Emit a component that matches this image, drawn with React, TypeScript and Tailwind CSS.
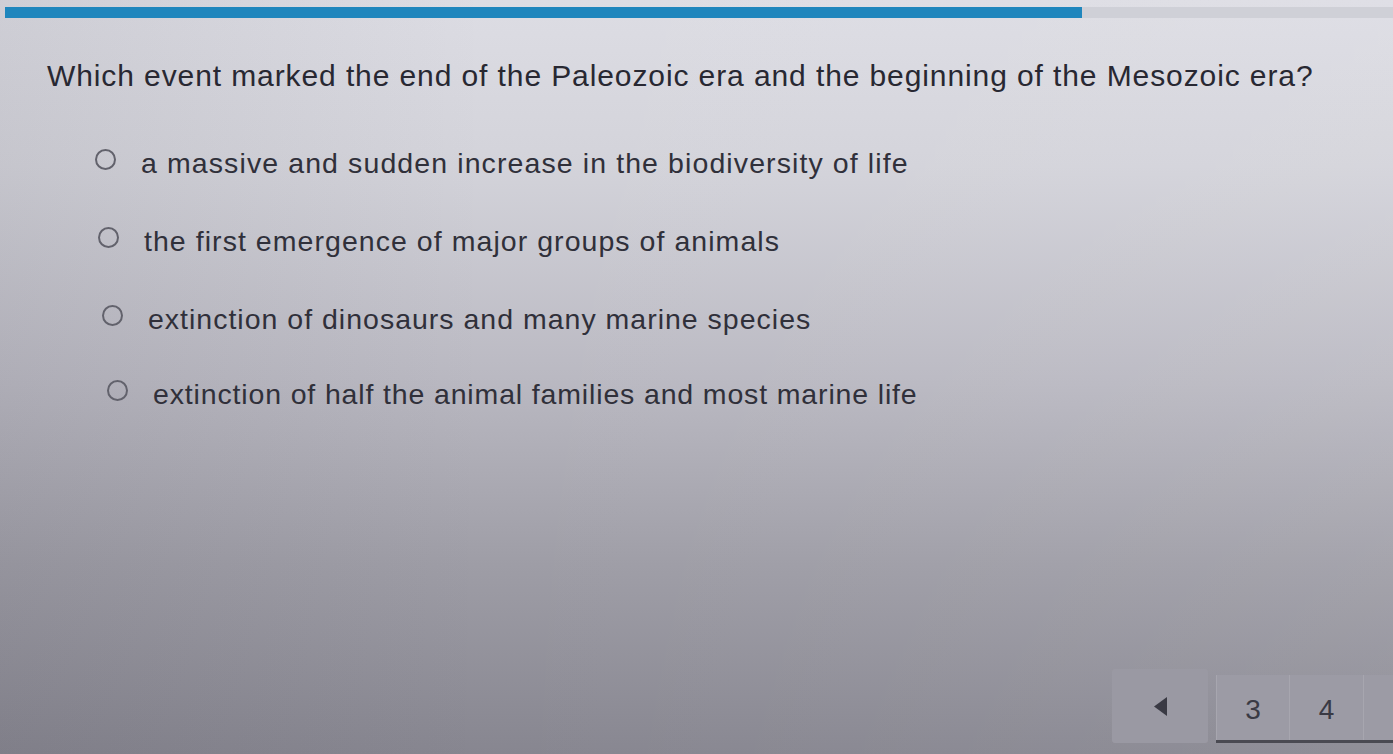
import React from "react";

const options = [
  { text: "a massive and sudden increase in the biodiversity of life", indent: "pl-[95px]", gap: "mt-[52px]", track: "tracking-[1.1px]" },
  { text: "the first emergence of major groups of animals", indent: "pl-[98px]", gap: "mt-[46px]", track: "tracking-[1.05px]" },
  { text: "extinction of dinosaurs and many marine species", indent: "pl-[102px]", gap: "mt-[46px]", track: "tracking-[1px]" },
  { text: "extinction of half the animal families and most marine life", indent: "pl-[107px]", gap: "mt-[43px]", track: "tracking-[0.85px]" },
];

function Radio() {
  return (
    <span className="mb-[9px] inline-block h-[21px] w-[21px] shrink-0 rounded-full border-2 border-[#62626c]" />
  );
}

export default function App() {
  return (
    <div
      className="relative flex h-[754px] w-[1393px] flex-col overflow-hidden bg-[linear-gradient(90deg,rgba(40,38,50,0.08)_0%,rgba(0,0,0,0)_35%,rgba(255,255,255,0.07)_100%),linear-gradient(180deg,#dddde4_0%,#d3d3da_22%,#bab9c2_50%,#9e9da6_75%,#878690_100%)]"
      style={{ fontFamily: '"Liberation Sans", Arial, sans-serif' }}
    >
      {/* progress bar */}
      <div className="mt-[7px] flex h-[11px] w-full pl-[5px]">
        <div className="h-full w-[1077px] bg-[#1f86bd]" />
        <div className="h-full flex-1 bg-[#cfd0d7]" />
      </div>

      {/* question */}
      <h1 className="mt-[39px] pl-[47px] text-[30px] leading-[38px] tracking-[0.9px] text-[#282832]">
        Which event marked the end of the Paleozoic era and the beginning of the Mesozoic era?
      </h1>

      {/* answers */}
      <div className="flex flex-col">
        {options.map((o) => (
          <label key={o.text} className={`flex items-end gap-[25px] ${o.indent} ${o.gap}`}>
            <Radio />
            <span className={`text-[28.5px] leading-[32px] text-[#30303a] ${o.track}`}>{o.text}</span>
          </label>
        ))}
      </div>

      {/* pagination */}
      <div className="mt-auto mb-[11px] flex items-end justify-end">
        <button className="mr-[8px] flex h-[74px] w-[96px] items-center justify-center rounded-[3px] bg-[#9a99a3]">
          <svg width="15" height="21" viewBox="0 0 15 21">
            <path d="M14 1 L1 10.5 L14 20 Z" fill="#3a3a44" />
          </svg>
        </button>
        <div className="flex h-[68px] border-b-[3px] border-[#4a4a52] bg-[#9c9ba5]">
          <div className="flex w-[74px] items-center justify-center border-x border-[#a7a6af] pt-[4px] text-[28px] text-[#3a3a44]">3</div>
          <div className="flex w-[74px] items-center justify-center border-r border-[#a7a6af] pt-[4px] text-[28px] text-[#3a3a44]">4</div>
          <div className="w-[29px]" />
        </div>
      </div>
    </div>
  );
}
